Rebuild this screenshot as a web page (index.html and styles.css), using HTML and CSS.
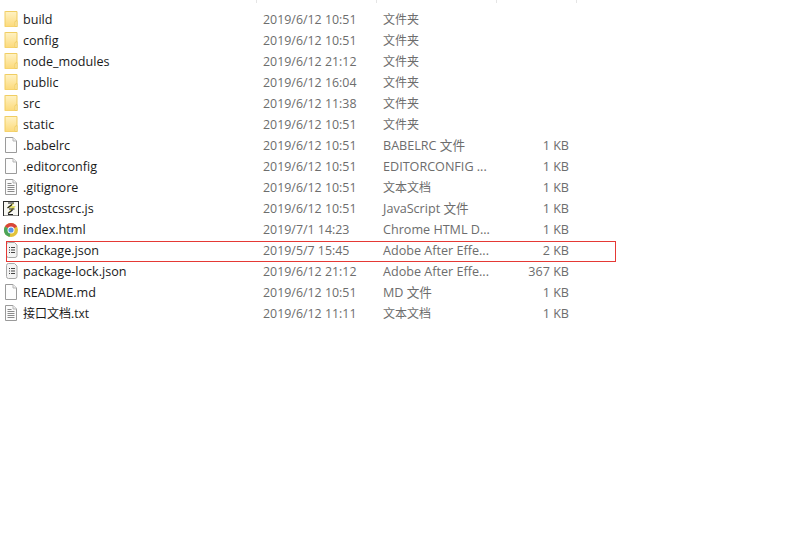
FILE: index.html
```html
<!DOCTYPE html>
<html lang="zh-CN">
<head>
<meta charset="utf-8">
<title>Files</title>
<link rel="stylesheet" href="styles.css">
</head>
<body>
<svg class="defs" width="0" height="0" aria-hidden="true">
  <defs><linearGradient id="fg" x1="0" y1="0" x2="0" y2="1"><stop offset="0" stop-color="#fff3c6"/><stop offset="1" stop-color="#fcd978"/></linearGradient></defs>
  <symbol id="folder" viewBox="0 0 16 16">
    <path d="M2.500.5h11.500v15.500h-11.500a.5.500 0 0 1-.5-.5v-15a.5.500 0 0 1 .5-.5z" fill="url(#fg)" stroke="#f0cd62"/>
    <path d="M12 15.500v-5l2-1v6z" fill="#fdeebd" stroke="#f0cd62"/>
  </symbol>
  <symbol id="blank" viewBox="0 0 16 16">
    <path d="M2.500.5h7.500l3.500 3.500v11.500h-11z" fill="#fdfdfd" stroke="#9a9a9a"/>
    <path d="M10 .5v3.500h3.500" fill="#f0f0f0" stroke="#b5b5b5"/>
  </symbol>
  <symbol id="text" viewBox="0 0 16 16">
    <path d="M2.500.5h7.500l3.500 3.500v11.500h-11z" fill="#fbfbfb" stroke="#9a9a9a"/>
    <path d="M10 .5v3.500h3.500" fill="#eee" stroke="#b5b5b5"/>
    <path d="M4.500 4.500h4M4.500 6.500h7M4.500 8.500h7M4.500 10.500h7M4.500 12.500h7" stroke="#8a8a8a" fill="none"/>
  </symbol>
  <symbol id="js" viewBox="0 0 16 16">
    <rect x=".5" y="1.500" width="15" height="14.500" fill="#f7f7f2" stroke="#2d2d2d"/>
    <path d="M10.500 3.500 6 7h5l-5 5.500" stroke="#d8d34a" stroke-width="1.500" fill="none"/>
    <path d="M5 3h6M9 4.500 4.500 8M6 9h5.500M9.500 10l-4.500 3.500M5 14.500h5" stroke="#1f1f1f" stroke-width="1.200" fill="none"/>
  </symbol>
  <symbol id="chrome" viewBox="0 0 16 16">
    <circle cx="8" cy="9" r="7" fill="#e2c33a"/>
    <path d="M8 9 1.900 5.500A7 7 0 0 1 14.100 5.500z" fill="#d9453a"/>
    <path d="M8 9 1.900 5.500A7 7 0 0 0 6.600 15.900z" fill="#4ba45a"/>
    <circle cx="8" cy="9" r="3.500" fill="#fff"/>
    <circle cx="8" cy="9" r="2.600" fill="#5a94e8"/>
  </symbol>
  <symbol id="json" viewBox="0 0 16 16">
    <path d="M5.500.5h6l2.500 2.500v10.500a2 2 0 0 1-2 2h-6.500a2 2 0 0 1-2-2v-11a2 2 0 0 1 2-2z" fill="#f4f4f4" stroke="#a8a8a8"/>
    <path d="M6 5.500h1M8 5.500h4M6 8h1M8 8h4M6 10.500h1M8 10.500h4" stroke="#444" fill="none"/>
  </symbol>
</svg>

<div class="header-ticks">
  <span class="tick tick-name"></span>
  <span class="tick tick-date"></span>
  <span class="tick tick-type"></span>
  <span class="tick tick-size"></span>
</div>

<ul class="files">
  <li class="row"><svg class="icon"><use href="#folder"/></svg><span class="name">build</span><span class="date">2019/6/12 10:51</span><span class="type zh">文件夹</span><span class="size"></span></li>
  <li class="row"><svg class="icon"><use href="#folder"/></svg><span class="name">config</span><span class="date">2019/6/12 10:51</span><span class="type zh">文件夹</span><span class="size"></span></li>
  <li class="row"><svg class="icon"><use href="#folder"/></svg><span class="name">node_modules</span><span class="date">2019/6/12 21:12</span><span class="type zh">文件夹</span><span class="size"></span></li>
  <li class="row"><svg class="icon"><use href="#folder"/></svg><span class="name">public</span><span class="date">2019/6/12 16:04</span><span class="type zh">文件夹</span><span class="size"></span></li>
  <li class="row"><svg class="icon"><use href="#folder"/></svg><span class="name">src</span><span class="date">2019/6/12 11:38</span><span class="type zh">文件夹</span><span class="size"></span></li>
  <li class="row"><svg class="icon"><use href="#folder"/></svg><span class="name">static</span><span class="date">2019/6/12 10:51</span><span class="type zh">文件夹</span><span class="size"></span></li>
  <li class="row"><svg class="icon"><use href="#blank"/></svg><span class="name">.babelrc</span><span class="date">2019/6/12 10:51</span><span class="type">BABELRC 文件</span><span class="size">1 KB</span></li>
  <li class="row"><svg class="icon"><use href="#blank"/></svg><span class="name">.editorconfig</span><span class="date">2019/6/12 10:51</span><span class="type">EDITORCONFIG ...</span><span class="size">1 KB</span></li>
  <li class="row"><svg class="icon"><use href="#text"/></svg><span class="name">.gitignore</span><span class="date">2019/6/12 10:51</span><span class="type zh">文本文档</span><span class="size">1 KB</span></li>
  <li class="row"><svg class="icon"><use href="#js"/></svg><span class="name">.postcssrc.js</span><span class="date">2019/6/12 10:51</span><span class="type">JavaScript 文件</span><span class="size">1 KB</span></li>
  <li class="row"><svg class="icon"><use href="#chrome"/></svg><span class="name">index.html</span><span class="date">2019/7/1 14:23</span><span class="type">Chrome HTML D...</span><span class="size">1 KB</span></li>
  <li class="row"><svg class="icon"><use href="#json"/></svg><span class="name">package.json</span><span class="date">2019/5/7 15:45</span><span class="type">Adobe After Effe...</span><span class="size">2 KB</span><span class="marker"></span></li>
  <li class="row"><svg class="icon"><use href="#json"/></svg><span class="name">package-lock.json</span><span class="date">2019/6/12 21:12</span><span class="type">Adobe After Effe...</span><span class="size">367 KB</span></li>
  <li class="row"><svg class="icon"><use href="#blank"/></svg><span class="name">README.md</span><span class="date">2019/6/12 10:51</span><span class="type">MD 文件</span><span class="size">1 KB</span></li>
  <li class="row"><svg class="icon"><use href="#text"/></svg><span class="name name-zh">接口文档.txt</span><span class="date">2019/6/12 11:11</span><span class="type zh">文本文档</span><span class="size">1 KB</span></li>
</ul>
</body>
</html>
```
FILE: styles.css
```css
* { box-sizing: border-box; }
html, body { margin: 0; padding: 0; background: #fff; }
body {
  width: 810px;
  height: 556px;
  overflow: hidden;
  font-family: "Open Sans", "Noto Sans CJK SC", sans-serif;
  font-size: 12.6px;
  color: #6d6d6d;
}
.defs { position: absolute; }
.header-ticks { display: flex; height: 3px; }
.tick { display: block; height: 3px; border-right: 1px solid #e5e5e5; }
.tick-name { width: 257px; }
.tick-date { width: 120px; }
.tick-type { width: 120px; }
.tick-size { width: 80px; }
.files { list-style: none; margin: 0; padding: 6px 0 0; }
.row {
  position: relative;
  display: grid;
  grid-template-columns: 23px 240px 120px 100px 86px;
  height: 21px;
  line-height: 21px;
  white-space: nowrap;
}
.icon { width: 16px; height: 16px; margin: 2px 0 0 3px; }
.name { color: #1a1a1a; }
.name-zh { font-size: 12px; }
.date { font-size: 12.4px; }
.zh { font-size: 12px; }
.size { text-align: right; }
.marker {
  position: absolute;
  left: 6px;
  top: 1px;
  width: 610px;
  height: 21px;
  border: 1px solid #e53935;
}
```
